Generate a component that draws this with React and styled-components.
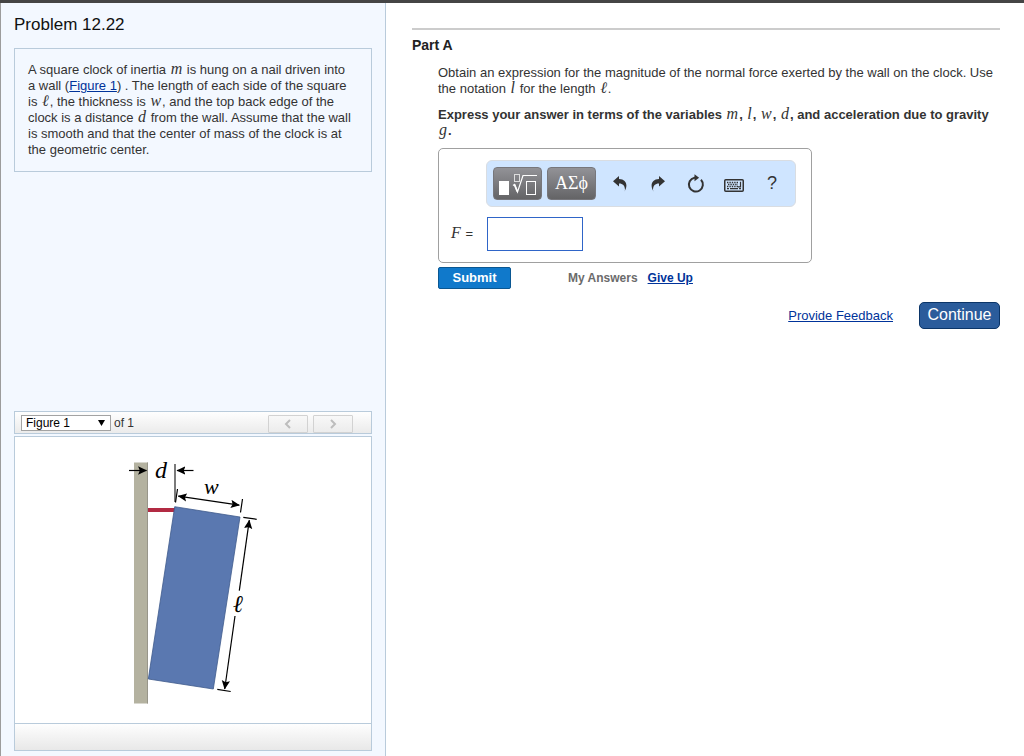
import React, { Component } from 'react';
import styled, { createGlobalStyle } from 'styled-components';

const GlobalStyle = createGlobalStyle`
  *, *::before, *::after {
    box-sizing: border-box;
  }

  body {
    margin: 0;
    background: #fff;
    color: #333;
    font-family: "Liberation Sans", Arial, sans-serif;
    font-size: 13px;
    line-height: 16px;
  }

  h1, h2, p {
    margin: 0;
  }

  a {
    color: #00339a;
  }
`;

const Page = styled.div`
  display: flex;
  min-height: 100vh;
  border-top: 3px solid #454545;
`;

const Sidebar = styled.aside`
  display: flex;
  flex-direction: column;
  flex: 0 0 386px;
  padding: 12px 13px 5px;
  background: #f3f8ff;
  border-left: 1px solid #9c9c9c;
  border-right: 1px solid #b9cbdb;
`;

const ProblemTitle = styled.h1`
  color: #111;
  font-size: 17px;
  font-weight: normal;
  line-height: 20px;
`;

const ProblemText = styled.div`
  margin-top: 13px;
  padding: 13px;
  border: 1px solid #b9cbdb;
`;

const Variable = styled.i`
  margin: 0 1px;
  font-family: "Liberation Serif", "Times New Roman", serif;
  font-size: 16px;
  font-weight: normal;
  line-height: 0;
`;

const Ell = styled(Variable)`
  font-family: "DejaVu Serif", serif;
`;

const Figure = styled.section`
  margin-top: auto;
`;

const FigureBar = styled.div`
  display: flex;
  align-items: center;
  height: 23px;
  padding: 0 18px 0 6px;
  border: 1px solid #b9cbdb;
  background: linear-gradient(#fefefe, #ebebeb);
  font-size: 12px;
`;

const SelectWrap = styled.span`
  position: relative;
  width: 90px;
  height: 16px;
  margin-right: 3px;

  svg {
    position: absolute;
    top: 5px;
    right: 6px;
    pointer-events: none;
  }
`;

const FigureSelect = styled.select`
  display: block;
  appearance: none;
  width: 100%;
  height: 16px;
  padding: 0 4px;
  border: 1px solid #a3a3a3;
  border-radius: 0;
  background: #fff;
  color: #000;
  font-family: inherit;
  font-size: 12px;
  line-height: 14px;
`;

const Pager = styled.div`
  display: flex;
  align-self: flex-end;
  gap: 5px;
  margin-left: auto;
`;

const PagerButton = styled.button`
  display: flex;
  align-items: center;
  justify-content: center;
  width: 40px;
  height: 18px;
  padding: 0;
  border: 1px solid #d2d2d2;
  border-radius: 1px;
  background: linear-gradient(#f8f8f8, #ececec);
`;

const FigurePanel = styled.div`
  margin-top: 2px;
  padding: 11px 0;
  border: 1px solid #b9cbdb;
  background: #fff;

  svg {
    display: block;
    margin: 0 auto;
  }
`;

const FigureFooter = styled.div`
  height: 27px;
  border: 1px solid #b9cbdb;
  border-top: none;
  background: linear-gradient(#fefefe, #e8e8e8);
`;

const Main = styled.main`
  flex: 1;
  min-width: 0;
  padding: 25px 24px 24px 26px;
`;

const Part = styled.section`
  border-top: 2px solid #ccc;
  padding-top: 7px;
`;

const PartTitle = styled.h2`
  color: #222;
  font-size: 14px;
  line-height: 16px;
`;

const PartBody = styled.div`
  padding: 12px 0 0 26px;
`;

const Instructions = styled.p`
  && {
    margin: 10px 0 9px;
  }
  font-weight: bold;
`;

const AnswerBox = styled.div`
  width: 374px;
  max-width: 100%;
  padding: 11px 15px 11px 11px;
  border: 1px solid #a0a0a0;
  border-radius: 5px;
`;

const Toolbar = styled.div`
  display: flex;
  align-items: center;
  height: 47px;
  margin-left: 36px;
  padding-left: 6px;
  border: 1px solid #d9dde2;
  border-radius: 6px;
  background: #cfe5ff;
`;

const PaletteButton = styled.button`
  display: flex;
  align-items: center;
  justify-content: center;
  flex: none;
  width: 49px;
  height: 33px;
  margin-right: 5px;
  padding: 0;
  border: 1px solid #77777c;
  border-radius: 4px;
  background: linear-gradient(#929297, #646466);
  color: #fff;
  font-family: "Liberation Serif", "Times New Roman", serif;
  font-size: 18px;
`;

const Tools = styled.div`
  display: flex;
`;

const ToolButton = styled.button`
  display: flex;
  align-items: center;
  justify-content: center;
  width: 38px;
  height: 34px;
  padding: 0;
  border: none;
  background: none;
  color: #333;
  font-family: inherit;
  font-size: 18px;
`;

const AnswerRow = styled.label`
  display: flex;
  align-items: center;
  margin-top: 10px;
`;

const AnswerName = styled.span`
  width: 37px;
`;

const AnswerInput = styled.input`
  width: 96px;
  height: 34px;
  padding: 4px;
  border: 1px solid #2f65c8;
  font-size: 16px;
`;

const SubmitRow = styled.div`
  display: flex;
  align-items: center;
  gap: 10px;
  margin-top: 4px;
  color: #6b6b6b;
  font-size: 12px;
  font-weight: bold;
`;

const SubmitButton = styled.button`
  width: 73px;
  height: 22px;
  margin-right: 47px;
  padding: 0 0 2px;
  border: 1px solid #0a5792;
  border-radius: 2px;
  background: #1079cb;
  color: #fff;
  font-family: inherit;
  font-size: 13px;
  font-weight: bold;
`;

const PageActions = styled.div`
  display: flex;
  align-items: center;
  justify-content: flex-end;
  gap: 26px;
  margin-top: 13px;
`;

const ContinueButton = styled.button`
  width: 81px;
  height: 27px;
  padding: 0 0 2px;
  border: 1px solid #0b3568;
  border-radius: 5px;
  background: #2b5c9b;
  color: #fff;
  font-family: inherit;
  font-size: 16px;
`;

const Chevron = ({ d }) => (
  <svg width="8" height="10" viewBox="0 0 8 10" fill="none" stroke="#bdbdbd" strokeWidth="2">
    <path d={d} />
  </svg>
);

const RootIcon = () => (
  <svg width="38" height="24" viewBox="0 0 38 24" fill="none" stroke="#fff">
    <rect x="0" y="9" width="10" height="14" fill="#fff" stroke="none" />
    <rect x="15.5" y="2.5" width="5" height="7" stroke="#ddd" />
    <path d="M14 13.500l1.500-1 3 7.500 5.500-16.500h14" strokeWidth="1.200" />
    <path d="M15.500 12.500l2.800 7" strokeWidth="1.800" />
    <rect x="27.5" y="9.5" width="9" height="13" />
  </svg>
);

const CurvedArrow = ({ flip }) => (
  <svg width="14" height="16" viewBox="0 0 14 16" fill="#333">
    <path
      transform={flip ? 'matrix(-1 0 0 1 14 0)' : undefined}
      d="M6 0L0 5.200l6 5.300V7.600c3.600-.1 6 2 6 6.400l-.6 1.800C15.300 9.500 13.500 3.300 6 3Z"
    />
  </svg>
);

const ResetIcon = () => (
  <svg width="18" height="20" viewBox="0 0 18 20" fill="none">
    <path d="M14 5.800a7 7 0 1 1-6.500-2.100l1.500-.1" stroke="#333" strokeWidth="2" />
    <path d="M7.500 .3l4.600 3.500-4.600 3.400Z" fill="#333" />
  </svg>
);

const KeyboardIcon = () => (
  <svg width="20" height="16" viewBox="0 0 20 16" fill="none" stroke="#333">
    <rect x=".75" y="3.750" width="18.500" height="11.500" rx="1" strokeWidth="1.500" />
    <path d="M3 6.500h12M4 8.500h10" strokeWidth="1.400" strokeDasharray="1.400 1" />
    <path d="M3 10.500h11" strokeWidth="1.400" strokeDasharray="1.400 1" />
    <path d="M16.500 5.800v5h-2.500" strokeWidth="1.200" />
    <path d="M3 12.600h2M6 12.600h8M15 12.600h2" strokeWidth="1.200" />
  </svg>
);

const ClockFigure = () => (
  <svg width="170" height="264" viewBox="108 448 170 264" role="img" aria-label="Clock hanging against a wall">
    <defs>
      <marker
        id="head"
        viewBox="0 0 8 8"
        refX="7.500"
        refY="4"
        markerWidth="9"
        markerHeight="9"
        markerUnits="userSpaceOnUse"
        orient="auto-start-reverse"
      >
        <path d="M0 .3L8 4 0 7.700 1.500 4Z" fill="#000" />
      </marker>
    </defs>
    <rect x="134" y="462.500" width="14" height="241" fill="#b4b2a0" />
    <path d="M147.500 462.500v241" stroke="#98968a" />
    <path d="M148 510h27" stroke="#b22a43" strokeWidth="4" />
    <path d="M174.700 506.700L240 517l-26.700 172-65-10Z" fill="#5a78b0" stroke="#3f5a8c" strokeWidth=".8" />
    <path d="M175 464v38" stroke="#333" strokeWidth="1.300" />
    <g stroke="#000" strokeWidth="1.200">
      <path d="M129 470.500h17.500" markerEnd="url(#head)" />
      <path d="M193.500 470.500H177" markerEnd="url(#head)" />
      <path d="M177.500 489l-2 13.500M242.500 499l-2 13.500M243.300 517.300l13.400 2M217.300 689.300l13.400 2.200" />
      <path d="M178.300 496.200l61 9" markerStart="url(#head)" markerEnd="url(#head)" />
      <path d="M239.300 590.700l10-70.500" markerEnd="url(#head)" />
      <path d="M235 616l-10.300 73" markerEnd="url(#head)" />
    </g>
    <g fill="#000" fontFamily="'Liberation Serif', serif" fontSize="24" fontStyle="italic">
      <text x="155" y="478">d</text>
      <text x="204" y="494" fontSize="22">w</text>
      <text x="233" y="612" fontFamily="'DejaVu Serif', serif">ℓ</text>
    </g>
  </svg>
);

class App extends Component {

  state = {
    answer: '',
  };

  changeAnswer = (e) => {
    this.setState({ answer: e.target.value });
  }

  render() {
    return (
      <Page>
        <GlobalStyle />
        <Sidebar>
          <ProblemTitle>Problem 12.22</ProblemTitle>
          <ProblemText>
            A square clock of inertia <Variable>m</Variable> is hung on a nail driven into<br />
            a wall (<a href="#figure">Figure 1</a>) . The length of each side of the square<br />
            is <Ell>ℓ</Ell>, the thickness is <Variable>w</Variable>, and the top back edge of the<br />
            clock is a distance <Variable>d</Variable> from the wall. Assume that the wall<br />
            is smooth and that the center of mass of the clock is at<br />
            the geometric center.
          </ProblemText>
          <Figure id="figure">
            <FigureBar>
              <SelectWrap>
                <FigureSelect aria-label="Figure">
                  <option>Figure 1</option>
                </FigureSelect>
                <svg width="7" height="6" viewBox="0 0 7 6">
                  <path d="M0 0h7L3.500 6Z" fill="#000" />
                </svg>
              </SelectWrap>
              of 1
              <Pager>
                <PagerButton aria-label="Previous figure" disabled>
                  <Chevron d="M6 1L2 5l4 4" />
                </PagerButton>
                <PagerButton aria-label="Next figure" disabled>
                  <Chevron d="M2 1l4 4-4 4" />
                </PagerButton>
              </Pager>
            </FigureBar>
            <FigurePanel>
              <ClockFigure />
            </FigurePanel>
            <FigureFooter />
          </Figure>
        </Sidebar>
        <Main>
          <Part>
            <PartTitle>Part A</PartTitle>
            <PartBody>
              <p>
                Obtain an expression for the magnitude of the normal force exerted by the wall on the clock. Use
                the notation <Variable>l</Variable> for the length <Ell>ℓ</Ell>.
              </p>
              <Instructions>
                Express your answer in terms of the variables <Variable>m</Variable>, <Variable>l</Variable>,{' '}
                <Variable>w</Variable>, <Variable>d</Variable>, and acceleration due to gravity<br />
                <Variable>g</Variable>.
              </Instructions>
              <AnswerBox>
                <Toolbar>
                  <PaletteButton aria-label="Templates"><RootIcon /></PaletteButton>
                  <PaletteButton aria-label="Greek letters">ΑΣϕ</PaletteButton>
                  <Tools>
                    <ToolButton aria-label="Undo"><CurvedArrow /></ToolButton>
                    <ToolButton aria-label="Redo"><CurvedArrow flip /></ToolButton>
                    <ToolButton aria-label="Reset"><ResetIcon /></ToolButton>
                    <ToolButton aria-label="Keyboard shortcuts"><KeyboardIcon /></ToolButton>
                    <ToolButton aria-label="Help">?</ToolButton>
                  </Tools>
                </Toolbar>
                <AnswerRow>
                  <AnswerName><Variable>F</Variable> =</AnswerName>
                  <AnswerInput name="answer" value={this.state.answer} onChange={this.changeAnswer} />
                </AnswerRow>
              </AnswerBox>
              <SubmitRow>
                <SubmitButton>Submit</SubmitButton>
                <span>My Answers</span>
                <a href="#give-up">Give Up</a>
              </SubmitRow>
            </PartBody>
          </Part>
          <PageActions>
            <a href="#feedback">Provide Feedback</a>
            <ContinueButton>Continue</ContinueButton>
          </PageActions>
        </Main>
      </Page>
    );
  }
}

export default App;
